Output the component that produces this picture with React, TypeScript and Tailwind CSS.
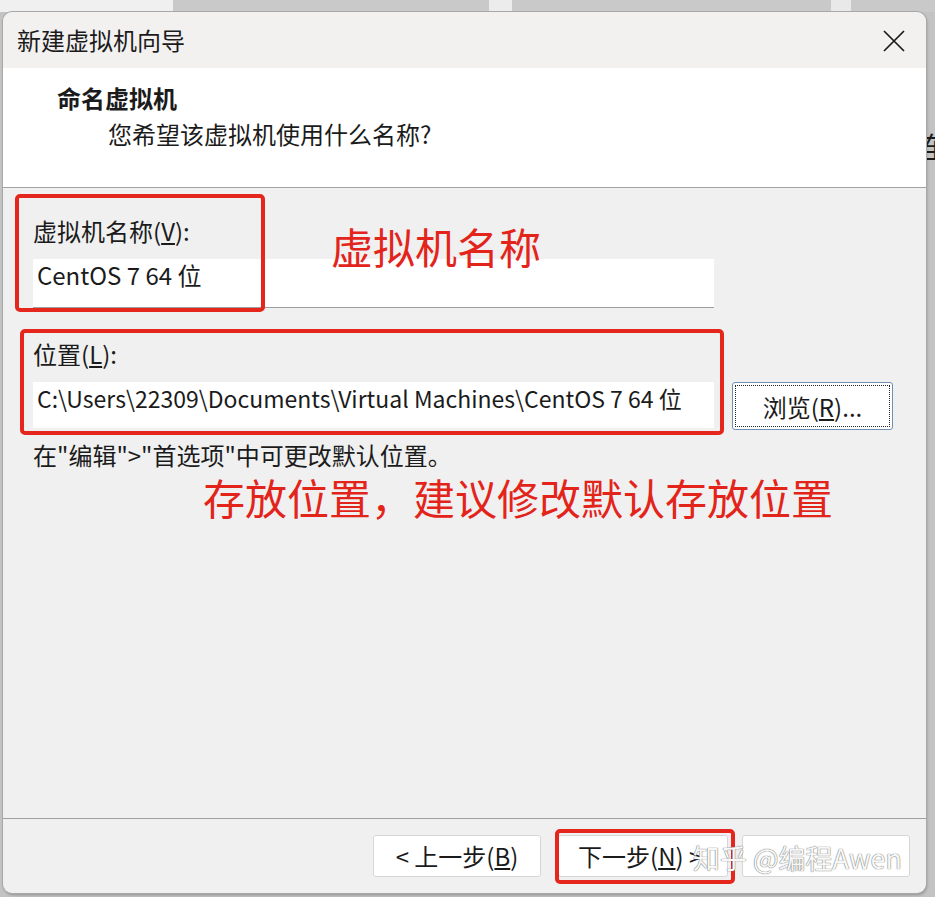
import React from "react";

const F = "font-['Noto_Sans_CJK_SC','Noto_Sans',sans-serif]";

export default function App() {
  return (
    <div className={`relative w-[935px] h-[897px] overflow-hidden bg-[#c3c3c3] ${F} text-[#1b1b1b]`}>
      {/* background desktop strip */}
      <div className="flex h-[12px]">
        <div className="w-[173px] bg-[#f0f0f0]" />
        <div className="w-[316px] bg-[#c9c9c9]" />
        <div className="w-[23px] bg-[#ececec]" />
        <div className="w-[319px] bg-[#c9c9c9]" />
        <div className="w-[20px] bg-[#e9e9e9]" />
        <div className="flex-1 bg-[#c9c9c9]" />
      </div>
      <span className="absolute left-[921px] top-[128px] text-[26px] leading-[34px] underline">车</span>

      {/* dialog */}
      <div className="relative ml-[3px] w-[923px] h-[881px] rounded-[9px] overflow-hidden flex flex-col shadow-[0_0_0_1px_#a8a8a8,1px_2px_3px_rgba(0,0,0,0.25)]">
        {/* title bar */}
        <div className="h-[56px] bg-[#f3f0f0] flex items-center justify-between pl-[14px] pr-[20px] shrink-0">
          <span className="text-[24px] leading-[30px]">新建虚拟机向导</span>
          <svg width="24" height="24" viewBox="0 0 24 24" className="mt-[1px]">
            <path d="M2 2 L22 22 M22 2 L2 22" stroke="#1a1a1a" strokeWidth="1.7" />
          </svg>
        </div>

        {/* header */}
        <div className="h-[120px] bg-white border-b border-[#a3a3a3] shrink-0 pl-[54px] pt-[15px]">
          <div className="text-[24px] leading-[30px] font-bold">命名虚拟机</div>
          <div className="text-[24px] leading-[30px] pl-[51px] mt-[6px]">您希望该虚拟机使用什么名称?</div>
        </div>

        {/* body */}
        <div className="relative flex-1 bg-[#f0f0f0] px-[30px] flex flex-col">
          <div className="mt-[28px] text-[24px] leading-[30px]">
            虚拟机名称(<span className="underline">V</span>):
          </div>
          <div className="mt-[13px] w-[681px] h-[49px] bg-white border-b border-[#9e9e9e] pl-[4px] pt-[1px] text-[24px] leading-[30px]">
            CentOS 7 64 位
          </div>
          <div className="mt-[31px] text-[24px] leading-[30px]">
            位置(<span className="underline">L</span>):
          </div>
          <div className="mt-[13px] flex items-start">
            <div className="w-[681px] h-[46px] bg-white pl-[4px] pt-[1px] text-[23px] leading-[30px] whitespace-nowrap">
              C:\Users\22309\Documents\Virtual Machines\CentOS 7 64 位
            </div>
            <div className="ml-[18px] w-[161px] h-[48px] bg-white border border-[#6f8fb3] rounded-[3px] p-[2px]">
              <div className="w-full h-full border border-dotted border-[#222] flex items-center justify-center text-[24px] leading-[30px] pt-[2px]">
                浏览(<span className="underline">R</span>)...
              </div>
            </div>
          </div>
          <div className="mt-[10px] text-[24px] leading-[30px]">在"编辑"&gt;"首选项"中可更改默认位置。</div>
          <div className="mt-[5px] ml-[170px] text-[42px] leading-[44px] text-[#e3241b] whitespace-nowrap">
            存放位置，建议修改默认存放位置
          </div>

          {/* annotations */}
          <div className="absolute left-[328px] top-[33px] text-[42px] leading-[50px] text-[#e3241b]">虚拟机名称</div>
          <div className="absolute left-[12px] top-[6px] w-[250px] h-[118px] border-[4px] border-[#e4261d] rounded-[5px]" />
          <div className="absolute left-[17px] top-[141px] w-[704px] h-[106px] border-[4px] border-[#e4261d] rounded-[5px]" />
        </div>

        {/* footer */}
        <div className="relative h-[75px] shrink-0 bg-[#f0f0f0] border-t border-[#a0a0a0] flex items-start pt-[16px] pl-[370px]">
          <div className="w-[168px] h-[42px] bg-white border border-[#d6d6d6] rounded-[3px] flex items-center justify-center text-[24px] leading-[30px]">
            &lt; 上一步(<span className="underline">B</span>)
          </div>
          <div className="ml-[17px] w-[170px] h-[42px] bg-white border border-[#d6d6d6] rounded-[3px] flex items-center justify-start pl-[19px] text-[24px] leading-[30px]">
            下一步(<span className="underline">N</span>) &gt;
          </div>
          <div className="ml-[14px] w-[168px] h-[42px] bg-white border border-[#d6d6d6] rounded-[3px]" />

          <div className="absolute left-[552px] top-[10px] w-[180px] h-[55px] border-[4px] border-[#e4261d] rounded-[5px]" />
          <div className="absolute left-[690px] top-[22px] text-[27px] leading-[34px] text-[#f7f7f7] whitespace-nowrap [text-shadow:0_0_1px_#6d6d6d,0_0_1px_#6d6d6d]">
            知乎 @编程Awen
          </div>
        </div>
      </div>
    </div>
  );
}
